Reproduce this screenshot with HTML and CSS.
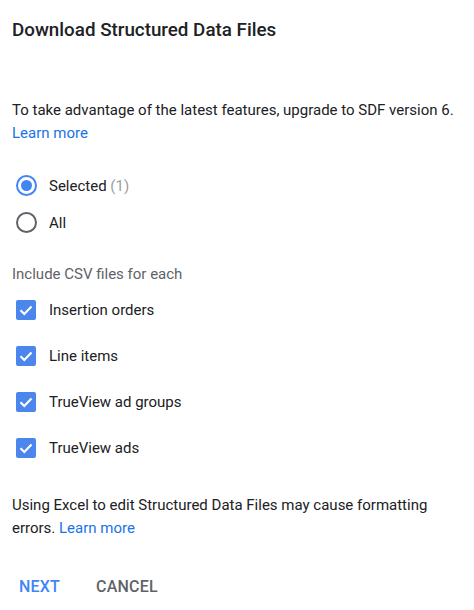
FILE: index.html
```html
<!DOCTYPE html>
<html>
<head>
<meta charset="utf-8">
<link rel="stylesheet" href="styles.css">
</head>
<body>
<div class="dialog">
  <h1 class="title">Download Structured Data Files</h1>
  <p class="text upgrade">To take advantage of the latest features, upgrade to SDF version 6. <a class="link" href="#">Learn more</a></p>
  <div class="radios">
    <label class="row radio-row">
      <span class="radio checked"><span class="dot"></span></span>
      <span class="label">Selected <span class="count">(1)</span></span>
    </label>
    <label class="row radio-row">
      <span class="radio"></span>
      <span class="label">All</span>
    </label>
  </div>
  <div class="section-label">Include CSV files for each</div>
  <div class="checks">
    <label class="row check-row">
      <span class="checkbox"><svg viewBox="0 0 20 20" width="20" height="20"><path d="M4.5 10.2 L8.3 14 L15.5 6.5" fill="none" stroke="#fff" stroke-width="2.2"/></svg></span>
      <span class="label">Insertion orders</span>
    </label>
    <label class="row check-row">
      <span class="checkbox"><svg viewBox="0 0 20 20" width="20" height="20"><path d="M4.5 10.2 L8.3 14 L15.5 6.5" fill="none" stroke="#fff" stroke-width="2.2"/></svg></span>
      <span class="label">Line items</span>
    </label>
    <label class="row check-row">
      <span class="checkbox"><svg viewBox="0 0 20 20" width="20" height="20"><path d="M4.5 10.2 L8.3 14 L15.5 6.5" fill="none" stroke="#fff" stroke-width="2.2"/></svg></span>
      <span class="label">TrueView ad groups</span>
    </label>
    <label class="row check-row">
      <span class="checkbox"><svg viewBox="0 0 20 20" width="20" height="20"><path d="M4.5 10.2 L8.3 14 L15.5 6.5" fill="none" stroke="#fff" stroke-width="2.2"/></svg></span>
      <span class="label">TrueView ads</span>
    </label>
  </div>
  <p class="text excel">Using Excel to edit Structured Data Files may cause formatting errors. <a class="link" href="#">Learn more</a></p>
  <div class="actions">
    <button class="btn primary">NEXT</button>
    <button class="btn">CANCEL</button>
  </div>
</div>
</body>
</html>
```

FILE: styles.css
```css
html, body {
  margin: 0;
  padding: 0;
  background: #ffffff;
}
body {
  font-family: Roboto, "Liberation Sans", Arial, sans-serif;
  color: #202124;
}
.dialog {
  padding: 18px 12px 0 12px;
  display: flex;
  flex-direction: column;
}
.title {
  margin: 0;
  font-size: 18.8px;
  font-weight: 500;
  line-height: 24px;
  color: #202124;
}
.text {
  margin: 0;
  font-size: 15px;
  line-height: 23px;
  color: #202124;
}
.upgrade {
  margin-top: 57px;
}
.link {
  color: #1a73e8;
  text-decoration: none;
}
.radios {
  margin-top: 22px;
  display: flex;
  flex-direction: column;
}
.row {
  display: flex;
  align-items: center;
  font-size: 15px;
}
.radio-row {
  height: 37px;
}
.radio {
  box-sizing: border-box;
  width: 21px;
  height: 21px;
  margin-left: 4px;
  border-radius: 50%;
  border: 2px solid #5f6368;
  display: flex;
  align-items: center;
  justify-content: center;
}
.radio.checked {
  border-color: #4285f4;
}
.dot {
  width: 11px;
  height: 11px;
  border-radius: 50%;
  background: #4285f4;
}
.label {
  margin-left: 12px;
}
.count {
  color: #9aa0a6;
}
.section-label {
  margin-top: 22px;
  font-size: 15px;
  line-height: 22px;
  color: #5f6368;
}
.checks {
  margin-top: 2px;
  display: flex;
  flex-direction: column;
}
.check-row {
  height: 46px;
}
.checkbox {
  width: 20px;
  height: 20px;
  margin-left: 4px;
  border-radius: 2px;
  background: #4a86ec;
  display: flex;
}
.check-row .label {
  margin-left: 13px;
}
.excel {
  margin-top: 23px;
}
.actions {
  margin-top: 28px;
  display: flex;
  gap: 20px;
  margin-left: -1px;
}
.btn {
  font-family: Roboto, "Liberation Sans", Arial, sans-serif;
  font-size: 16px;
  font-weight: 500;
  height: 36px;
  padding: 0 8px;
  border: none;
  background: transparent;
  color: #5f6368;
  letter-spacing: 0.2px;
}
.btn.primary {
  color: #4285f4;
}
```
